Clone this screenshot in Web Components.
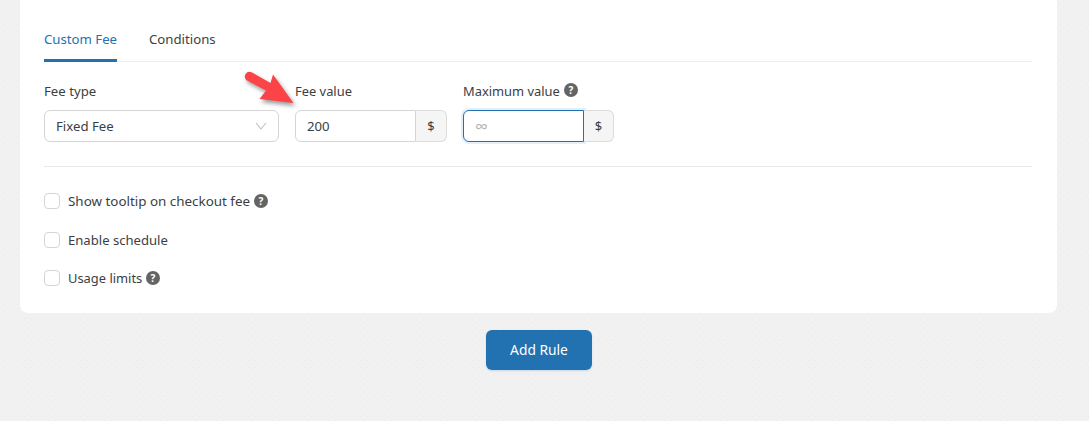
<!DOCTYPE html>
<html>
<head>
<meta charset="utf-8">
<style>
  html, body { margin: 0; height: 100%; }
  body {
    position: relative;
    overflow: hidden;
    background-color: #f1f1f2;
    background-image: radial-gradient(#e9e9eb 0.7px, transparent 1px), radial-gradient(#ebebed 0.7px, transparent 1px);
    background-size: 7px 7px, 7px 7px;
    background-position: 0 0, 3px 4px;
    font-family: "Noto Sans", "Open Sans", sans-serif;
    font-size: 13.2px;
    color: #3a3f44;
  }
</style>
</head>
<body>
<rule-page>
  <rule-card>
    <rule-tabs slot="tabs"></rule-tabs>
    <div slot="fees" style="display:flex;gap:16px;align-items:flex-start">
      <fee-select label="Fee type" value="Fixed Fee"></fee-select>
      <fee-input label="Fee value" value="200"></fee-input>
      <fee-input label="Maximum value" placeholder="∞" focused help></fee-input>
    </div>
    <rule-check slot="checks" help style="font-size:13.4px">Show tooltip on checkout fee</rule-check>
    <rule-check slot="checks" style="font-size:13.1px">Enable schedule</rule-check>
    <rule-check slot="checks" help style="font-size:12.9px">Usage limits</rule-check>
  </rule-card>
  <add-button>Add Rule</add-button>
</rule-page>
<red-arrow></red-arrow>

<script>
(function () {
  const helpIcon = `<svg width="14" height="14" viewBox="0 0 14 14" style="display:block"><circle cx="7" cy="7" r="7" fill="#646464"/><text x="7" y="10.6" text-anchor="middle" font-size="10" font-weight="700" font-family="Noto Sans, sans-serif" fill="#fff">?</text></svg>`;

  class RulePage extends HTMLElement {
    constructor() {
      super();
      this.attachShadow({ mode: "open" }).innerHTML = `
      <style>
        :host { display: flex; flex-direction: column; align-items: center; }
      </style>
      <slot></slot>`;
    }
  }

  class RuleCard extends HTMLElement {
    constructor() {
      super();
      this.attachShadow({ mode: "open" }).innerHTML = `
      <style>
        :host {
          display: block;
          box-sizing: border-box;
          width: 1037px;
          height: 313px;
          margin: 0 32px 0 20px;
          padding: 0 25px 0 24px;
          background: #fff;
          border-radius: 0 0 8px 8px;
        }
        .fees { display: block; padding-top: 20px; padding-bottom: 24px; border-bottom: 1px solid #e8e8e8; }
        .checks { display: flex; flex-direction: column; gap: 19.5px; padding-top: 24.5px; }
      </style>
      <slot name="tabs"></slot>
      <div class="fees"><slot name="fees"></slot></div>
      <div class="checks"><slot name="checks"></slot></div>`;
    }
  }

  class RuleTabs extends HTMLElement {
    constructor() {
      super();
      this.attachShadow({ mode: "open" }).innerHTML = `
      <style>
        :host { display: flex; gap: 32px; height: 62px; box-sizing: border-box; border-bottom: 1px solid #ececec; }
        div { height: 62px; box-sizing: border-box; padding-top: 30px; line-height: 18px; }
        .on { color: #2271b1; border-bottom: 3px solid #2271b1; }
      </style>
      <div class="on">Custom Fee</div>
      <div>Conditions</div>`;
    }
  }

  class FeeSelect extends HTMLElement {
    connectedCallback() {
      this.attachShadow({ mode: "open" }).innerHTML = `
      <style>
        :host { display: block; width: 235px; }
        label { display: block; height: 20px; line-height: 18px; margin-bottom: 8px; }
        .box {
          box-sizing: border-box; height: 32px; padding: 0 11px;
          display: flex; align-items: center; justify-content: space-between;
          border: 1px solid #d5d5d5; border-radius: 6px; background: #fff;
        }
      </style>
      <label>${this.getAttribute("label")}</label>
      <div class="box">
        <span>${this.getAttribute("value")}</span>
        <svg width="12" height="8" viewBox="0 0 12 8"><path d="M1 1l5 6 5-6" fill="none" stroke="#bdbdbd" stroke-width="1.1"/></svg>
      </div>`;
    }
  }

  class FeeInput extends HTMLElement {
    connectedCallback() {
      const value = this.getAttribute("value");
      const holder = this.getAttribute("placeholder");
      this.attachShadow({ mode: "open" }).innerHTML = `
      <style>
        :host { display: block; }
        label { display: flex; align-items: flex-start; gap: 4px; height: 20px; line-height: 18px; margin-bottom: 8px; font-size: 12.9px; }
        label svg { margin-top: 1px; }
        .group { display: flex; height: 32px; }
        .field {
          box-sizing: border-box; width: 121px; padding: 0 11px; line-height: 30px;
          border: 1px solid #d5d5d5; border-radius: 6px 0 0 6px; background: #fff;
        }
        .holder { color: #b4b4b4; font-size: 18px; }
        .unit {
          box-sizing: border-box; width: 31px; text-align: center; line-height: 30px; font-size: 13px;
          border: 1px solid #dcdcdc; border-left: 0; border-radius: 0 6px 6px 0; background: #f5f5f5;
        }
        :host([focused]) .field { border-color: #2271b1; box-shadow: 0 0 0 2px #e3f0fa; }
        :host([focused]) .unit { width: 30px; }
      </style>
      <label>${this.getAttribute("label")}${this.hasAttribute("help") ? helpIcon : ""}</label>
      <div class="group">
        <div class="field">${value ? value : `<span class="holder">${holder}</span>`}</div>
        <div class="unit">$</div>
      </div>`;
    }
  }

  class RuleCheck extends HTMLElement {
    connectedCallback() {
      this.attachShadow({ mode: "open" }).innerHTML = `
      <style>
        :host { display: flex; align-items: center; height: 19px; }
        i { box-sizing: border-box; width: 16px; height: 16px; margin-right: 8px; border: 1px solid #d5d5d5; border-radius: 4px; background: #fff; }
        span { display: block; margin-left: 4px; }
      </style>
      <i></i><slot></slot>${this.hasAttribute("help") ? `<span>${helpIcon}</span>` : ""}`;
    }
  }

  class AddButton extends HTMLElement {
    constructor() {
      super();
      this.attachShadow({ mode: "open" }).innerHTML = `
      <style>
        :host {
          display: block; box-sizing: border-box; width: 106px; height: 40px; margin: 17px 11px 0 0;
          background: #2271b1; color: #fff; border-radius: 6px; text-align: center; line-height: 40px; font-size: 13.8px;
          box-shadow: 0 1px 2px rgba(34,113,177,.2);
        }
      </style>
      <slot></slot>`;
    }
  }

  class RedArrow extends HTMLElement {
    constructor() {
      super();
      this.attachShadow({ mode: "open" }).innerHTML = `
      <style>
        :host { position: absolute; left: 235px; top: 62px; width: 70px; height: 55px; }
        svg { display: block; overflow: visible; filter: drop-shadow(2px 3px 2px rgba(0,0,0,.4)); }
      </style>
      <svg width="70" height="55" viewBox="235 62 70 55">
        <path d="M273 74.5L293.5 103 259.5 99 266 90.500 247 80.500Q243.500 78 245.500 74 248 70.500 252 72.500L270.500 83Z" fill="#fb4348"/>
      </svg>`;
    }
  }

  window.customElements.define("rule-page", RulePage);
  window.customElements.define("rule-card", RuleCard);
  window.customElements.define("rule-tabs", RuleTabs);
  window.customElements.define("fee-select", FeeSelect);
  window.customElements.define("fee-input", FeeInput);
  window.customElements.define("rule-check", RuleCheck);
  window.customElements.define("add-button", AddButton);
  window.customElements.define("red-arrow", RedArrow);
})();
</script>
</body>
</html>
